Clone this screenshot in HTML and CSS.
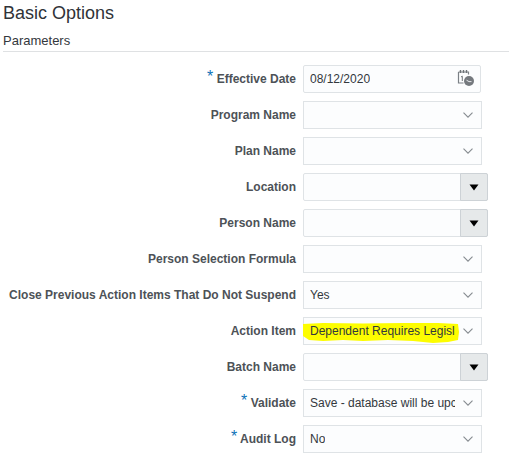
FILE: index.html
```html
<!DOCTYPE html>
<html lang="en">
<head>
<meta charset="utf-8">
<title>Basic Options</title>
<link rel="stylesheet" href="styles.css">
</head>
<body>
<svg class="defs" width="0" height="0" aria-hidden="true">
  <symbol id="chev" viewBox="0 0 10 6"><path d="M.5.7 5 5.2 9.5.7" fill="none" stroke="#868b90" stroke-width="1.1"/></symbol>
  <symbol id="tri" viewBox="0 0 10 7"><path d="M.5.5h9L5 6.5z" fill="#000"/></symbol>
</svg>
<h1 class="title">Basic Options</h1>
<h2 class="subtitle">Parameters</h2>
<form class="form">
  <label class="label"><span class="req">*</span> Effective Date</label>
  <div class="field date"><span class="value">08/12/2020</span>
    <svg class="cal" width="18" height="18" viewBox="0 0 18 18" aria-hidden="true">
      <path d="M1.500 3h10v2.500M1.500 3v11h5" fill="none" stroke="#7b8085" stroke-width="1.2"/>
      <path d="M3.500 1v3M6.500 1v3M9.500 1v3" stroke="#6f7478" stroke-width="1.4"/>
      <path d="M4 8l1.300-.8V12" fill="none" stroke="#6f7478" stroke-width="1"/>
      <circle cx="12" cy="12" r="5" fill="#75797e"/>
      <path d="M9.500 11.200l2.500 1.400h2.500" fill="none" stroke="#e6e8ea" stroke-width="1"/>
    </svg>
  </div>

  <label class="label">Program Name</label>
  <div class="field select"><svg class="chev"><use href="#chev"/></svg></div>

  <label class="label">Plan Name</label>
  <div class="field select"><svg class="chev"><use href="#chev"/></svg></div>

  <label class="label">Location</label>
  <div class="field lov"><button class="lov-btn" type="button" aria-label="Search"><svg class="tri"><use href="#tri"/></svg></button></div>

  <label class="label">Person Name</label>
  <div class="field lov"><button class="lov-btn" type="button" aria-label="Search"><svg class="tri"><use href="#tri"/></svg></button></div>

  <label class="label">Person Selection Formula</label>
  <div class="field select"><svg class="chev"><use href="#chev"/></svg></div>

  <label class="label">Close Previous Action Items That Do Not Suspend</label>
  <div class="field select"><span class="value">Yes</span><svg class="chev"><use href="#chev"/></svg></div>

  <label class="label">Action Item</label>
  <div class="field select">
    <svg class="highlight" width="158" height="24" viewBox="0 0 158 24" aria-hidden="true">
      <path d="M0 4 20 3 60 3.500 100 3 135 3 155 4 156 12 155 20 145 22 130 23 110 21 85 20 60 21 40 20 20 21 6 20 0 16z" fill="#fdfd00"/>
    </svg>
    <span class="value">Dependent Requires Legisl</span><svg class="chev"><use href="#chev"/></svg>
  </div>

  <label class="label">Batch Name</label>
  <div class="field lov"><button class="lov-btn" type="button" aria-label="Search"><svg class="tri"><use href="#tri"/></svg></button></div>

  <label class="label"><span class="req">*</span> Validate</label>
  <div class="field select"><span class="value">Save - database will be upc</span><svg class="chev"><use href="#chev"/></svg></div>

  <label class="label"><span class="req">*</span> Audit Log</label>
  <div class="field select"><span class="value">No</span><svg class="chev"><use href="#chev"/></svg></div>
</form>
</body>
</html>
```
FILE: styles.css
```css
* { box-sizing: border-box; }
html, body { margin: 0; padding: 0; background: #fff; }
body {
  width: 509px;
  height: 462px;
  overflow: hidden;
  font-family: "Liberation Sans", Arial, sans-serif;
  color: #33383d;
}
.defs { position: absolute; }
.title {
  margin: 0;
  padding: 2px 0 0 3px;
  height: 30px;
  font-size: 18px;
  line-height: 22px;
  font-weight: 400;
  color: #2f3338;
}
.subtitle {
  margin: 0 0 13px 3px;
  height: 22px;
  padding-top: 3px;
  font-size: 13px;
  line-height: 15px;
  font-weight: 400;
  color: #33383d;
  border-bottom: 1px solid #dfe1e3;
}
.form {
  display: grid;
  grid-template-columns: 296px 1fr;
  column-gap: 7px;
  row-gap: 8px;
  grid-auto-rows: 28px;
  align-items: center;
}
.label {
  text-align: right;
  font-size: 12px;
  font-weight: 700;
  color: #4d5257;
  white-space: nowrap;
  line-height: 14px;
}
.req {
  color: #0f72b8;
  font-size: 16px;
  line-height: 10px;
  font-weight: 400;
  vertical-align: 1px;
}
.field {
  position: relative;
  display: flex;
  align-items: center;
  height: 28px;
  width: 179px;
  padding-left: 6px;
  background: #fcfdfe;
  border: 1px solid #dfe3e6;
  font-size: 12px;
  color: #33383d;
}
.field.date { width: 178px; border-radius: 2px; }
.field.lov { width: 185px; border-radius: 2px; }
.value {
  position: relative;
  max-width: 145px;
  overflow: hidden;
  white-space: nowrap;
}
.chev { position: absolute; right: 8px; top: 10px; width: 10px; height: 6px; }
.cal { position: absolute; right: 5px; top: 3px; }
.highlight { position: absolute; left: -1px; top: 2px; }
.lov-btn {
  position: absolute;
  right: -1px;
  top: -1px;
  width: 28px;
  height: 28px;
  padding: 0;
  display: flex;
  align-items: center;
  justify-content: center;
  background: #e6e9ea;
  border: 1px solid #cdd2d6;
  border-radius: 0 2px 2px 0;
}
.tri { width: 10px; height: 7px; }
```
